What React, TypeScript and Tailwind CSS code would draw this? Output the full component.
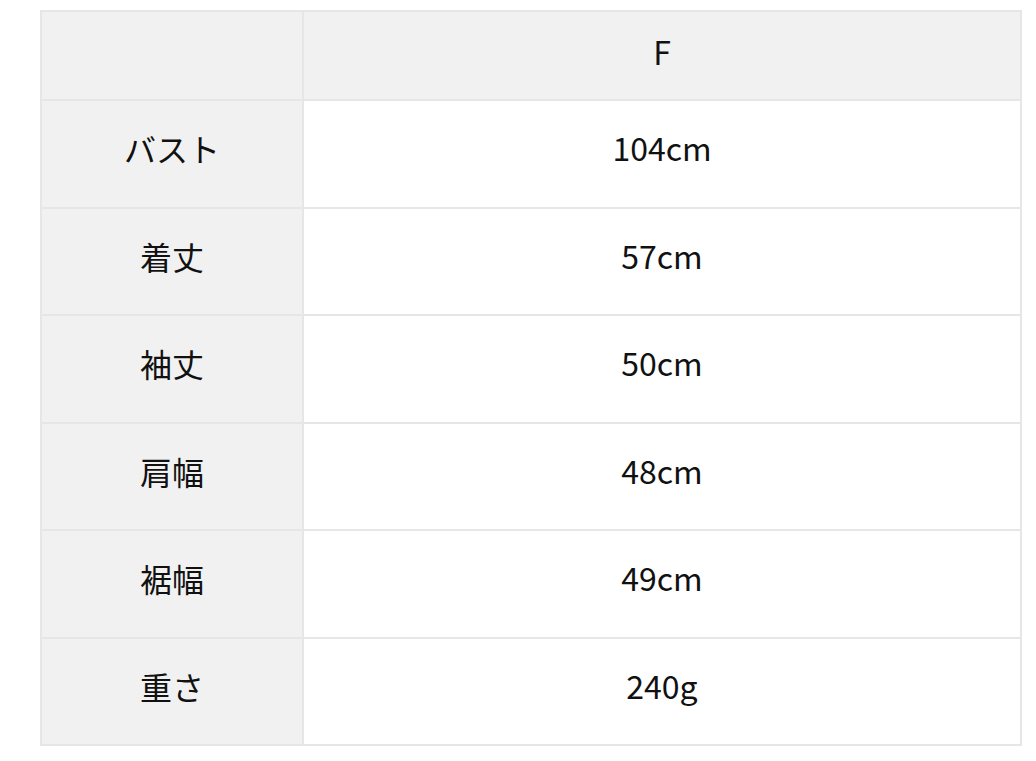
import React from "react";

const rows: [string, string][] = [
  ["バスト", "104cm"],
  ["着丈", "57cm"],
  ["袖丈", "50cm"],
  ["肩幅", "48cm"],
  ["裾幅", "49cm"],
  ["重さ", "240g"],
];

export default function App() {
  return (
    <div
      className="w-[1036px] h-[761px] bg-white pl-[40px] pt-[10px]"
      style={{ fontFamily: '"Noto Sans CJK JP", "Noto Sans", sans-serif' }}
    >
      <table className="w-[982px] border-collapse text-[32px] text-[#111] leading-none">
        <colgroup>
          <col className="w-[262px]" />
          <col />
        </colgroup>
        <thead>
          <tr className="h-[89px]">
            <th className="border-2 border-[#e6e6e6] bg-[#f1f1f1] font-normal"></th>
            <th className="border-2 border-[#e6e6e6] bg-[#f1f1f1] font-normal text-center pb-[9px]">
              F
            </th>
          </tr>
        </thead>
        <tbody>
          {rows.map(([k, v]) => (
            <tr key={k} className="h-[107.5px]">
              <th className="border-2 border-[#e6e6e6] bg-[#f1f1f1] font-normal text-center pb-[11px]">
                {k}
              </th>
              <td className="border-2 border-[#e6e6e6] bg-white text-center pb-[13px]">
                {v}
              </td>
            </tr>
          ))}
        </tbody>
      </table>
    </div>
  );
}
